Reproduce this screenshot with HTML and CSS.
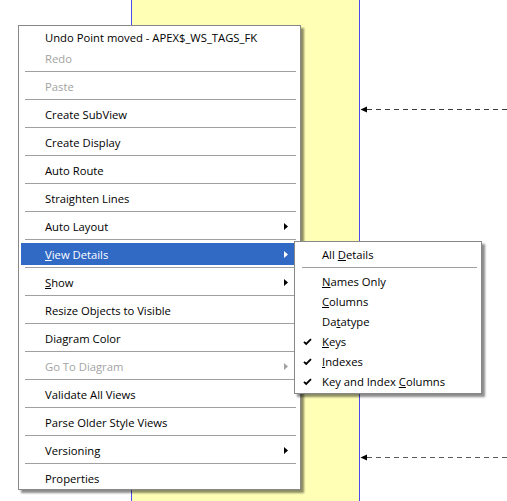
FILE: index.html
```html
<!DOCTYPE html>
<html>
<head>
<meta charset="utf-8">
<link rel="stylesheet" href="styles.css">
</head>
<body>
<div class="canvas">
  <svg class="diagram" width="507" height="501" viewBox="0 0 507 501">
    <rect x="131.5" y="-2" width="228" height="506" fill="#ffffb5" stroke="#4b4bf0" stroke-width="1"/>
    <line x1="367" y1="109.5" x2="507" y2="109.5" stroke="#3a3a3a" stroke-width="1" stroke-dasharray="5 4"/>
    <polygon points="360.5,109.5 367,106.5 367,112.5" fill="#000"/>
    <line x1="367" y1="457.5" x2="507" y2="457.5" stroke="#5a5a5a" stroke-width="1" stroke-dasharray="5 4"/>
    <polygon points="360.5,457.5 367,454.5 367,460.5" fill="#000"/>
  </svg>

  <div class="menu main-menu">
    <div class="item first">Undo Point moved - APEX$_WS_TAGS_FK</div>
    <div class="item disabled">Redo</div>
    <div class="sep"></div>
    <div class="item disabled">Paste</div>
    <div class="sep"></div>
    <div class="item">Create SubView</div>
    <div class="sep"></div>
    <div class="item">Create Display</div>
    <div class="sep"></div>
    <div class="item">Auto Route</div>
    <div class="sep"></div>
    <div class="item">Straighten Lines</div>
    <div class="sep"></div>
    <div class="item has-sub">Auto Layout<svg class="arrow" width="4" height="7" viewBox="0 0 4 7"><polygon points="0,0 4,3.5 0,7"/></svg></div>
    <div class="sep"></div>
    <div class="item has-sub active"><span><u>V</u>iew Details</span><svg class="arrow" width="4" height="7" viewBox="0 0 4 7"><polygon points="0,0 4,3.5 0,7"/></svg></div>
    <div class="sep"></div>
    <div class="item has-sub"><span><u>S</u>how</span><svg class="arrow" width="4" height="7" viewBox="0 0 4 7"><polygon points="0,0 4,3.5 0,7"/></svg></div>
    <div class="sep"></div>
    <div class="item">Resize Objects to Visible</div>
    <div class="sep"></div>
    <div class="item">Diagram Color</div>
    <div class="sep"></div>
    <div class="item has-sub disabled">Go To Diagram<svg class="arrow" width="4" height="7" viewBox="0 0 4 7"><polygon points="0,0 4,3.5 0,7"/></svg></div>
    <div class="sep"></div>
    <div class="item">Validate All Views</div>
    <div class="sep"></div>
    <div class="item">Parse Older Style Views</div>
    <div class="sep"></div>
    <div class="item has-sub">Versioning<svg class="arrow" width="4" height="7" viewBox="0 0 4 7"><polygon points="0,0 4,3.5 0,7"/></svg></div>
    <div class="sep"></div>
    <div class="item">Properties</div>
  </div>

  <div class="menu sub-menu">
    <div class="sitem"><span class="check"></span><span>All <u>D</u>etails</span></div>
    <div class="ssep"></div>
    <div class="sitem"><span class="check"></span><span><u>N</u>ames Only</span></div>
    <div class="sitem"><span class="check"></span><span><u>C</u>olumns</span></div>
    <div class="sitem"><span class="check"></span><span>Da<u>t</u>atype</span></div>
    <div class="sitem"><span class="check"><svg width="9" height="8" viewBox="0 0 9 8"><polyline points="1,3.8 3.2,6 8,1.2" fill="none" stroke="#000" stroke-width="1.8"/></svg></span><span><u>K</u>eys</span></div>
    <div class="sitem"><span class="check"><svg width="9" height="8" viewBox="0 0 9 8"><polyline points="1,3.8 3.2,6 8,1.2" fill="none" stroke="#000" stroke-width="1.8"/></svg></span><span><u>I</u>ndexes</span></div>
    <div class="sitem"><span class="check"><svg width="9" height="8" viewBox="0 0 9 8"><polyline points="1,3.8 3.2,6 8,1.2" fill="none" stroke="#000" stroke-width="1.8"/></svg></span><span>Key and Index <u>C</u>olumns</span></div>
  </div>
</div>
</body>
</html>
```

FILE: styles.css
```css
html, body {
  margin: 0;
  padding: 0;
  background: #ffffff;
}

.canvas {
  position: relative;
  width: 507px;
  height: 501px;
  overflow: hidden;
  background: #ffffff;
  font-family: "Open Sans", "Noto Sans", "DejaVu Sans", sans-serif;
  font-size: 11.25px;
  color: #000000;
}

.diagram {
  position: absolute;
  left: 0;
  top: 0;
  display: block;
}

.menu {
  position: absolute;
  box-sizing: border-box;
  background: #ffffff;
  border: 1px solid #888888;
  box-shadow: 3px 3px 2px rgba(0, 0, 0, 0.45);
}

.main-menu {
  left: 18px;
  top: 25px;
  width: 283px;
  padding: 0;
}

.item {
  box-sizing: border-box;
  height: 22px;
  margin: 0 2px;
  padding: 2px 10px 0 24px;
  display: flex;
  align-items: center;
  justify-content: space-between;
  line-height: 20px;
  white-space: nowrap;
}

.item.first {
  height: 21px;
}

.item.disabled {
  color: #a3a3a3;
}

.item.active {
  background: #316ac5;
  color: #ffffff;
}

.arrow {
  display: block;
  fill: #000000;
  margin-top: -1px;
}

.item.active .arrow {
  fill: #ffffff;
}

.item.disabled .arrow {
  fill: #a3a3a3;
}

.sep {
  height: 1px;
  background: #a0a0a0;
  margin: 2px 4px 3px 6px;
}

.sub-menu {
  left: 294px;
  top: 241px;
  width: 188px;
  padding: 2px 0;
}

.sitem {
  box-sizing: border-box;
  height: 20px;
  padding-top: 2px;
  display: flex;
  align-items: center;
  line-height: 18px;
  white-space: nowrap;
}

.check {
  width: 27px;
  box-sizing: border-box;
  padding-left: 8px;
  display: flex;
  align-items: center;
  margin-top: -1px;
}

.check svg {
  display: block;
}

.ssep {
  height: 1px;
  background: #a0a0a0;
  margin: 3px 4px 3px 7px;
}

u {
  text-decoration: underline;
  text-underline-offset: 1px;
}
```
